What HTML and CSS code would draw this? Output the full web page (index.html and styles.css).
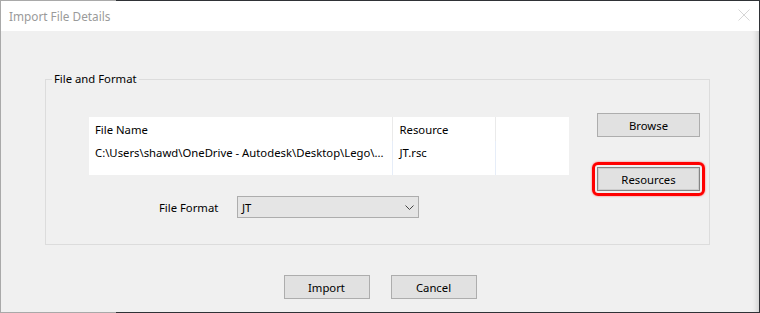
FILE: index.html
```html
<!DOCTYPE html>
<html lang="en">

<head>
    <meta charset="UTF-8">
    <title>Import File Details</title>
    <link rel="stylesheet" href="styles.css">
</head>

<body>

    <div class="dialog">
        <!-- Barra de título -->
        <div class="titlebar">
            <span class="title">Import File Details</span>
            <svg class="close" width="12" height="12" viewBox="0 0 12 12">
                <path d="M0.5 0.5 L11.5 11.5 M11.5 0.5 L0.5 11.5" stroke="#d6d6d6" stroke-width="1" fill="none" />
            </svg>
        </div>

        <div class="content">
            <fieldset class="group">
                <legend>File and Format</legend>
                <div class="group-body">
                    <div class="left">
                        <table class="files">
                            <tr class="head">
                                <td class="col-name">File Name</td>
                                <td class="col-res">Resource</td>
                                <td></td>
                            </tr>
                            <tr class="row">
                                <td class="col-name">C:\Users\shawd\OneDrive - Autodesk\Desktop\Lego\...</td>
                                <td class="col-res">JT.rsc</td>
                                <td></td>
                            </tr>
                            <tr class="filler">
                                <td></td>
                                <td></td>
                                <td></td>
                            </tr>
                        </table>

                        <div class="format-row">
                            <label class="format-label">File Format</label>
                            <div class="select">
                                <span>JT</span>
                                <svg width="9" height="5" viewBox="0 0 9 5">
                                    <path d="M0.5 0.5 L4.5 4.5 L8.5 0.5" stroke="#444" stroke-width="1" fill="none" />
                                </svg>
                            </div>
                        </div>
                    </div>

                    <div class="right">
                        <button class="btn">Browse</button>
                        <span class="highlight">
                            <button class="btn focused">Resources</button>
                        </span>
                    </div>
                </div>
            </fieldset>

            <div class="actions">
                <button class="btn wide">Import</button>
                <button class="btn wide">Cancel</button>
            </div>
        </div>
    </div>

</body>

</html>
```

FILE: styles.css
```css
* {
    margin: 0;
    padding: 0;
    box-sizing: border-box;
}

body {
    width: 760px;
    height: 313px;
    padding: 1px;
    background: linear-gradient(to right, #a9a9a9 116px, #2f3236 116px);
    font-family: "Noto Sans", "Open Sans", sans-serif;
    font-size: 11.3px;
    color: #000000;
    overflow: hidden;
}

.dialog {
    height: 311px;
    width: 758px;
    display: flex;
    flex-direction: column;
    background: #f0f0f0;
}

.titlebar {
    height: 30px;
    background: #ffffff;
    display: flex;
    align-items: center;
    justify-content: space-between;
    padding: 0 9px 0 8px;
}

.title {
    color: #9a9a9a;
    font-size: 11.8px;
    margin-top: -1px;
}

.close {
    margin-top: -2px;
}

.content {
    flex: 1;
    padding: 40px 0 0 44px;
    box-shadow: inset -7px 0 6px -6px rgba(0, 0, 0, 0.18);
}

.group {
    width: 665px;
    height: 174px;
    border: 1px solid #dcdcdc;
}

.group legend {
    line-height: 16px;
    margin-left: 6px;
    padding: 0 2px;
}

.group-body {
    display: flex;
    justify-content: space-between;
    padding: 0 9px 0 43px;
}

.left {
    padding-top: 30px;
}

.files {
    width: 480px;
    height: 58px;
    background: #ffffff;
    border-collapse: collapse;
    table-layout: fixed;
}

.files td {
    border-right: 1px solid #e6edf8;
    padding: 0 6px;
    white-space: nowrap;
    overflow: hidden;
}

.files td:last-child {
    border-right: none;
}

.files .col-name {
    width: 303px;
}

.files .col-res {
    width: 103px;
    padding-left: 7px;
}

.files .head {
    height: 24px;
}

.files .head td {
    border-right-color: #eaeaea;
}

.files .row {
    height: 22px;
}

.format-row {
    display: flex;
    align-items: center;
    margin-top: 21px;
}

.format-label {
    width: 78px;
    margin-left: 70px;
}

.select {
    width: 182px;
    height: 22px;
    border: 1px solid #adadad;
    background: #e5e5e5;
    display: flex;
    align-items: center;
    justify-content: space-between;
    padding: 0 4px 0 4px;
}

.select svg {
    margin-top: 1px;
}

.right {
    width: 103px;
    padding-top: 26px;
    display: flex;
    flex-direction: column;
}

.btn {
    font-family: inherit;
    font-size: inherit;
    color: #000000;
    width: 103px;
    height: 24px;
    border: 1px solid #adadad;
    background: #e1e1e1;
}

.highlight {
    display: block;
    margin: 25px -5px 0;
    padding: 2px;
    border: 3px solid #ff0000;
    border-radius: 6px;
    box-shadow: 0 0 2px rgba(255, 0, 0, 0.6);
}

.focused {
    display: block;
    border-color: #858585;
    box-shadow: inset 0 0 0 1px #cdcdcd;
}

.actions {
    display: flex;
    justify-content: center;
    gap: 21px;
    margin-top: 30px;
    margin-left: -44px;
}

.wide {
    width: 86px;
}
```
